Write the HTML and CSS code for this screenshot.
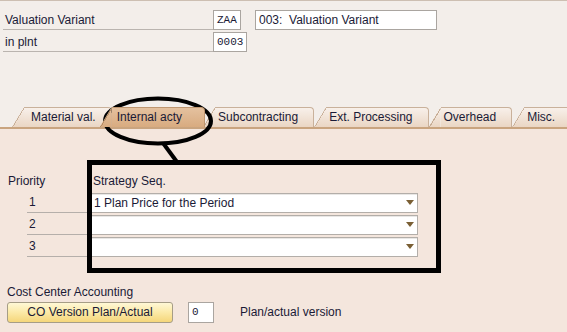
FILE: index.html
```html
<!DOCTYPE html>
<html>
<head>
<meta charset="utf-8">
<link rel="stylesheet" href="styles.css">
</head>
<body>
<div class="header">
  <div class="field-row">
    <span class="field-label">Valuation Variant</span>
    <span class="input mono w-zaa">ZAA</span>
    <span class="input desc">003:  Valuation Variant</span>
  </div>
  <div class="field-row second">
    <span class="field-label">in plnt</span>
    <span class="input mono w-plnt">0003</span>
  </div>
</div>
<div class="tabs">
  <div class="tab tab-first">Material val.</div>
  <div class="tab tab-active">Internal acty</div>
  <div class="tab tab-after">Subcontracting</div>
  <div class="tab">Ext. Processing</div>
  <div class="tab">Overhead</div>
  <div class="tab">Misc.</div>
</div>
<div class="panel">
  <div class="strategy">
    <div class="col-head">Priority</div>
    <div class="col-head seq">Strategy Seq.</div>
    <div class="prio">1</div>
    <div class="select"><span>1 Plan Price for the Period</span><svg class="arrow" width="8" height="5" viewBox="0 0 8 5"><path d="M0 0H8L4 5Z" fill="#7a5f34"/></svg></div>
    <div class="prio">2</div>
    <div class="select"><span></span><svg class="arrow" width="8" height="5" viewBox="0 0 8 5"><path d="M0 0H8L4 5Z" fill="#7a5f34"/></svg></div>
    <div class="prio">3</div>
    <div class="select"><span></span><svg class="arrow" width="8" height="5" viewBox="0 0 8 5"><path d="M0 0H8L4 5Z" fill="#7a5f34"/></svg></div>
  </div>
  <div class="section-title">Cost Center Accounting</div>
  <div class="btn-row">
    <button class="btn">CO Version Plan/Actual</button>
    <span class="input mono w-ver">0</span>
    <span class="btn-note">Plan/actual version</span>
  </div>
</div>
<svg class="annotation" width="567" height="332" viewBox="0 0 567 332">
  <ellipse cx="158" cy="121" rx="53" ry="22.5" fill="none" stroke="#000" stroke-width="4"/>
  <line x1="163" y1="143" x2="177" y2="162" stroke="#000" stroke-width="4"/>
  <rect x="89.5" y="162.5" width="349" height="108" fill="none" stroke="#000" stroke-width="5"/>
</svg>
</body>
</html>
```
FILE: styles.css
```css
* { box-sizing: border-box; }
html, body { margin: 0; padding: 0; }
body {
  width: 567px;
  height: 332px;
  overflow: hidden;
  position: relative;
  background: #f3eeea;
  font-family: "Liberation Sans", Arial, sans-serif;
  font-size: 12px;
  color: #1a1a36;
}
.header {
  border-top: 1px solid #cdbfb2;
  padding-top: 9px;
}
.field-row {
  display: flex;
  margin-left: 3px;
  height: 20px;
}
.field-row.second { margin-top: 2px; }
.field-label {
  width: 210px;
  height: 20px;
  border-bottom: 1px solid #bab4af;
  padding: 2px 0 0 2px;
  line-height: 17px;
}
.input {
  display: inline-block;
  height: 20px;
  border: 1px solid #aaa5a0;
  background: #fff;
  padding-left: 3px;
  line-height: 18px;
  white-space: pre;
}
.mono {
  font-family: "Liberation Mono", "Courier New", monospace;
  font-size: 11px;
  color: #1a1a36;
}
.w-zaa { width: 28px; }
.w-plnt { width: 34px; }
.desc { width: 182px; margin-left: 14px; }

.tabs {
  margin-top: 55px;
  display: flex;
  height: 22px;
  padding-left: 12px;
  border-bottom: 2px solid #c9a47f;
  white-space: nowrap;
}
.tab {
  position: relative;
  margin-left: 12px;
  height: 20px;
  padding: 0 15px 0 3px;
  border-top: 1px solid #c9b19b;
  border-right: 1px solid #c9b19b;
  border-top-right-radius: 4px;
  background: linear-gradient(#f8f0ea, #ead6c4);
  line-height: 18px;
  flex: none;
}
.tab::before {
  content: "";
  position: absolute;
  left: -12px;
  top: -1px;
  bottom: 0;
  width: 12px;
  clip-path: polygon(100% 0, 100% 100%, 0 100%);
  background:
    linear-gradient(to bottom right, transparent 50%, #c6ad96 50%, #c6ad96 calc(50% + 0.9px), transparent calc(50% + 0.9px)),
    linear-gradient(#f8f0ea, #ead6c4);
}
.tab-first { padding-left: 7px; }
.tab-active {
  margin-left: 0;
  padding: 0 22px 0 5px;
  z-index: 2;
  border-color: #be9670;
  background: linear-gradient(#e4c19f, #d8ab80);
}
.tab-active::before {
  background:
    linear-gradient(to bottom right, transparent 50%, #b68d67 50%, #b68d67 calc(50% + 0.9px), transparent calc(50% + 0.9px)),
    linear-gradient(#e4c19f, #d8ab80);
}
.tab-after { margin-left: 10px; }

.panel {
  background: #f4e6dd;
  height: 203px;
  padding: 43px 0 0 7px;
}
.strategy {
  display: grid;
  grid-template-columns: 83px 328px;
  grid-template-rows: 19px 20px 20px 20px;
  row-gap: 2px;
}
.col-head {
  line-height: 19px;
  padding-left: 1px;
}
.col-head.seq { padding-left: 3px; }
.prio {
  margin-left: 20px;
  border-bottom: 1px solid #b5afaa;
  padding-left: 2px;
  line-height: 19px;
}
.select {
  display: flex;
  align-items: center;
  border: 1px solid #b3aea9;
  background: #fff;
  box-shadow: inset 0 1px 0 #e9e7e5, inset 1px 0 0 #f0eeec;
  padding-left: 3px;
  line-height: 18px;
}
.select span { flex: 1; }
.arrow { margin-right: 3px; margin-top: -2px; }

.section-title {
  margin-top: 27px;
  line-height: 16px;
}
.btn-row {
  margin-top: 2px;
  display: flex;
  align-items: flex-start;
}
.btn {
  width: 166px;
  height: 21px;
  margin: 0;
  padding: 0;
  border: 1px solid #a69d86;
  border-radius: 3px;
  background: linear-gradient(#fff8d6, #fcebab 45%, #f5d67a);
  font-family: "Liberation Sans", Arial, sans-serif;
  font-size: 12px;
  color: #1a1a36;
  line-height: 19px;
  text-align: center;
}
.w-ver { width: 26px; height: 21px; margin-left: 15px; line-height: 19px; }
.btn-note { margin-left: 26px; line-height: 21px; }

.annotation {
  position: absolute;
  left: 0;
  top: 0;
  pointer-events: none;
}
```
